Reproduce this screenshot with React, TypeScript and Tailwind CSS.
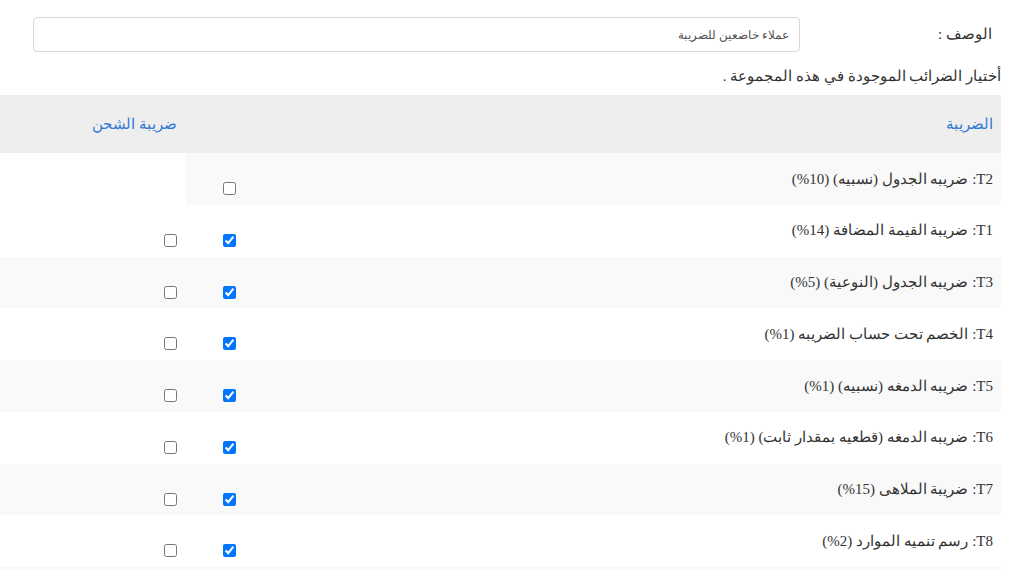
import React from "react";

const rows: { label: string; checked: boolean; ship: boolean }[] = [
  { label: "T2: ضريبه الجدول (نسبيه) (10%)", checked: false, ship: false },
  { label: "T1: ضريبة القيمة المضافة (14%)", checked: true, ship: true },
  { label: "T3: ضريبه الجدول (النوعية) (5%)", checked: true, ship: true },
  { label: "T4: الخصم تحت حساب الضريبه (1%)", checked: true, ship: true },
  { label: "T5: ضريبه الدمغه (نسبيه) (1%)", checked: true, ship: true },
  { label: "T6: ضريبه الدمغه (قطعيه بمقدار ثابت) (1%)", checked: true, ship: true },
  { label: "T7: ضريبة الملاهى (15%)", checked: true, ship: true },
  { label: "T8: رسم تنميه الموارد (2%)", checked: true, ship: true },
];

export default function App() {
  return (
    <div
      dir="rtl"
      className="w-[1001px] h-[570px] overflow-hidden bg-white text-[#333] text-[15px]"
      style={{ fontFamily: '"Liberation Serif", "DejaVu Serif", serif' }}
    >
      <div className="flex items-center pt-[17px] h-[35px] box-content">
        <div className="w-[201px] pr-[9px] flex items-center h-[35px]">الوصف :</div>
        <div className="w-[767px] h-[35px] border border-[#d6d6d6] rounded-[4px] flex items-center pr-[10px] text-[12px] text-[#555]">
          عملاء خاضعين للضريبة
        </div>
      </div>
      <div className="h-[43px] flex items-center pt-[5px]">أختيار الضرائب الموجودة في هذه المجموعة .</div>
      <div className="flex flex-col">
        <div className="flex h-[58px] bg-[#eeeeee] text-[#3379d4]">
          <div className="w-[757px] pr-[8px] flex items-center">الضريبة</div>
          <div className="w-[58px]"></div>
          <div className="w-[186px] pr-[9px] flex items-center">ضريبة الشحن</div>
        </div>
        {rows.map((r, i) => {
          const striped = i % 2 === 0;
          const bg = striped ? "bg-[#f9f9f9]" : "bg-white";
          return (
            <div key={i} className="flex h-[51.75px] shrink-0">
              <div className={`w-[757px] pr-[8px] flex items-center ${bg}`}>{r.label}</div>
              <div className={`w-[58px] pr-[8px] pt-[29px] ${bg}`}>
                <input type="checkbox" defaultChecked={r.checked} className="m-0 w-[13px] h-[13px] block" />
              </div>
              {i === 0 ? (
                <div className="w-[186px] bg-white"></div>
              ) : (
                <div className={`w-[186px] pr-[9px] pt-[29px] ${bg}`}>
                  <input type="checkbox" defaultChecked={false} className="m-0 w-[13px] h-[13px] block" />
                </div>
              )}
            </div>
          );
        })}
        <div className="h-[51.75px] shrink-0 bg-[#f9f9f9]"></div>
      </div>
    </div>
  );
}
